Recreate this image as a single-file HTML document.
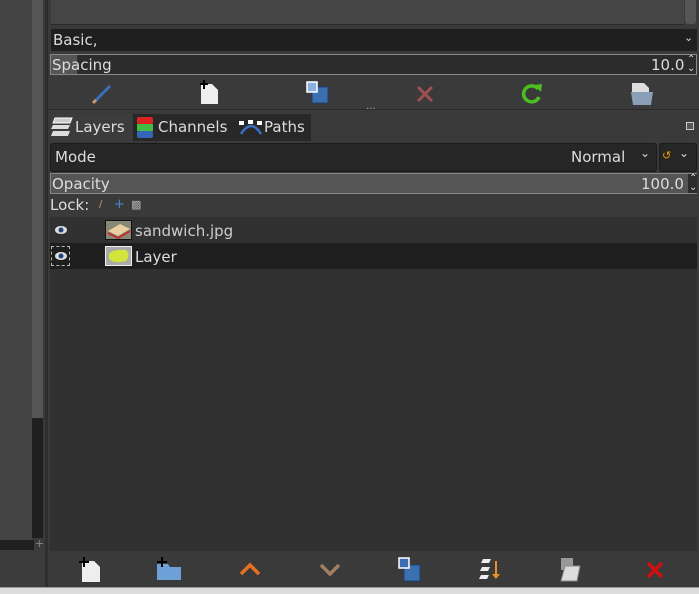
<!DOCTYPE html><html><head><style>
*{margin:0;padding:0;box-sizing:border-box}
body{width:699px;height:594px;overflow:hidden;background:#3a3a3a;font-family:"DejaVu Sans","Liberation Sans",sans-serif;color:#ddd;font-size:15px;position:relative}
.a{position:absolute}
.t{position:absolute;white-space:nowrap}
</style></head><body>
<div class="a" style="left:0;top:0;width:33px;height:540px;background:#444"></div>
<div class="a" style="left:32px;top:0;width:11px;height:420px;background:#555"></div>
<div class="a" style="left:32px;top:418px;width:11px;height:120px;background:#1f1f1f"></div>
<div class="a" style="left:0;top:540px;width:34px;height:10px;background:#1f1f1f"></div>
<div class="t" style="left:35px;top:537px;font-size:11px;color:#888">+</div>
<div class="a" style="left:0;top:550px;width:45px;height:37px;background:#3c3c3c"></div>
<div class="a" style="left:45px;top:0;width:3px;height:587px;background:#2e2e2e"></div>
<div class="a" style="left:0;top:587px;width:699px;height:7px;background:#dcdcdc;border-top:1px solid #999"></div>
<div class="a" style="left:48px;top:0;width:651px;height:587px;background:#3a3a3a"></div>
<div class="a" style="left:51px;top:0;width:633px;height:25px;background:#454545;border-bottom:1px solid #2a2a2a"></div>
<div class="a" style="left:685px;top:0;width:11px;height:24px;background:#555;border-radius:0 0 3px 3px"></div>
<div class="a" style="left:51px;top:29px;width:646px;height:22px;background:#1f1f1f"></div>
<div class="t" style="left:53px;top:31px">Basic,</div>
<div class="t" style="left:684px;top:31px;font-size:11px">⌄</div>
<div class="a" style="left:50px;top:54px;width:647px;height:21px;background:#2c2c2c;border:1px solid #888"></div>
<div class="a" style="left:51px;top:55px;width:26px;height:19px;background:#555"></div>
<div class="t" style="left:52px;top:56px">Spacing</div>
<div class="t" style="left:651px;top:56px">10.0</div>
<div class="t" style="left:687px;top:55px;font-size:10px;line-height:9px">⌃<br>⌄</div>
<svg class="a" style="left:90px;top:82px" width="24" height="24"><path d="M4 20 L20 4" stroke="#3a6fc0" stroke-width="3"/><path d="M3 21 L6 18" stroke="#c96" stroke-width="3"/></svg>
<svg class="a" style="left:198px;top:80px" width="24" height="26"><path d="M3 4 H14 L20 10 V24 H3Z" fill="#eee"/><path d="M6 0V9M2 4H10" stroke="#000" stroke-width="2"/></svg>
<svg class="a" style="left:306px;top:81px" width="24" height="24"><rect x="6" y="6" width="16" height="16" fill="#3a6fb0" stroke="#1e3f70"/><rect x="1" y="1" width="10" height="10" fill="#8ab0e0" stroke="#fff" stroke-width="1.5"/></svg>
<svg class="a" style="left:415px;top:84px" width="20" height="20"><path d="M3 3L17 17M17 3L3 17" stroke="#a05050" stroke-width="3"/></svg>
<svg class="a" style="left:521px;top:82px" width="24" height="22"><path d="M17 7 A8 8 0 1 0 18 15" fill="none" stroke="#4cbf20" stroke-width="3.5"/><path d="M13 3 L21 2 L20 10Z" fill="#4cbf20"/></svg>
<svg class="a" style="left:629px;top:82px" width="26" height="24"><path d="M3 1H15L20 6V14H3Z" fill="#ddd"/><path d="M2 10H24L22 23H4Z" fill="#8aa0b8"/></svg>
<div class="a" style="left:48px;top:109px;width:651px;height:1px;background:#2a2a2a"></div>
<div class="t" style="left:366px;top:101px;font-size:10px;color:#aaa">...</div>
<div class="a" style="left:50px;top:114px;width:82px;height:27px;background:#3c3c3c"></div>
<svg class="a" style="left:50px;top:116px" width="24" height="22"><path d="M5 2H22L20 7H3Z" fill="#ccc" stroke="#fff"/><path d="M3 9H20L18 13H1Z" fill="#ddd"/><path d="M3 15H20L18 20H1Z" fill="#ddd"/></svg>
<div class="t" style="left:75px;top:118px">Layers</div>
<div class="a" style="left:133px;top:114px;width:104px;height:27px;background:#282828"></div>
<svg class="a" style="left:136px;top:116px" width="18" height="24"><rect x="1" y="1" width="16" height="7" rx="2" fill="#d22"/><rect x="1" y="8" width="16" height="7" fill="#4b4"/><rect x="1" y="15" width="16" height="7" rx="2" fill="#36b"/></svg>
<div class="t" style="left:158px;top:118px">Channels</div>
<div class="a" style="left:237px;top:114px;width:74px;height:27px;background:#282828"></div>
<svg class="a" style="left:238px;top:118px" width="26" height="20"><path d="M3 16 Q13 0 23 16" fill="none" stroke="#3a6fc0" stroke-width="2.5"/><rect x="1" y="3" width="5" height="4" fill="#fff"/><rect x="10" y="2" width="5" height="4" fill="#fff"/><rect x="19" y="3" width="5" height="4" fill="#fff"/></svg>
<div class="t" style="left:264px;top:118px">Paths</div>
<div class="a" style="left:686px;top:122px;width:8px;height:8px;border:1px solid #ccc;background:#555"></div>
<div class="a" style="left:50px;top:143px;width:607px;height:29px;background:#262626;border-radius:3px;border:1px solid #1a1a1a"></div>
<div class="t" style="left:55px;top:148px">Mode</div>
<div class="t" style="left:571px;top:148px">Normal</div>
<div class="t" style="left:640px;top:146px;font-size:12px">⌄</div>
<div class="a" style="left:659px;top:143px;width:38px;height:29px;background:#262626;border-radius:3px;border:1px solid #1a1a1a"></div>
<div class="t" style="left:662px;top:149px;font-size:11px;color:#e90">↺</div>
<div class="t" style="left:679px;top:146px;font-size:12px">⌄</div>
<div class="a" style="left:50px;top:173px;width:647px;height:21px;background:#555;border:1px solid #888"></div>
<div class="t" style="left:52px;top:175px">Opacity</div>
<div class="t" style="left:641px;top:175px">100.0</div>
<div class="a" style="left:688px;top:174px;width:9px;height:19px;background:#2c2c2c"></div>
<div class="t" style="left:689px;top:174px;font-size:10px;line-height:9px">⌃<br>⌄</div>
<div class="t" style="left:50px;top:196px">Lock:</div>
<div class="t" style="left:99px;top:199px;font-size:10px;color:#c96">/</div>
<div class="t" style="left:114px;top:197px;font-size:13px;color:#48c">+</div>
<div class="t" style="left:131px;top:198px;font-size:11px;color:#aaa">▩</div>
<div class="a" style="left:50px;top:217px;width:647px;height:334px;background:#313131"></div>
<div class="a" style="left:50px;top:243px;width:647px;height:26px;background:#1e1e1e"></div>
<svg class="a" style="left:54px;top:225px" width="14" height="10"><ellipse cx="7" cy="5" rx="6" ry="4" fill="#ddd"/><circle cx="7" cy="5" r="2.5" fill="#247"/></svg>
<div class="a" style="left:51px;top:246px;width:19px;height:20px;border:1px dashed #bbb"></div>
<svg class="a" style="left:54px;top:251px" width="14" height="10"><ellipse cx="7" cy="5" rx="6" ry="4" fill="#ddd"/><circle cx="7" cy="5" r="2.5" fill="#247"/></svg>
<div class="a" style="left:105px;top:220px;width:27px;height:20px;background:#887;border:1px solid #111"></div>
<svg class="a" style="left:106px;top:221px" width="25" height="18"><path d="M2 10L14 3L24 8L12 15Z" fill="#e8d0a0"/><path d="M2 12L12 17L24 10" stroke="#b33" stroke-width="2" fill="none"/></svg>
<div class="t" style="left:135px;top:222px;color:#ccc">sandwich.jpg</div>
<div class="a" style="left:105px;top:246px;width:27px;height:20px;background:#aaa;border:1px solid #eee"></div>
<svg class="a" style="left:106px;top:247px" width="25" height="18"><path d="M3 7Q6 2 20 3Q25 8 20 14Q8 17 3 12Z" fill="#d4e43c"/></svg>
<div class="t" style="left:135px;top:248px">Layer</div>
<svg class="a" style="left:78px;top:557px" width="24" height="26"><path d="M4 4H16L22 10V25H4Z" fill="#eee"/><path d="M6 0V10M1 5H11" stroke="#000" stroke-width="2"/></svg>
<svg class="a" style="left:156px;top:557px" width="26" height="24"><path d="M1 7H12L14 10H25V23H1Z" fill="#6ea0d8"/><path d="M6 0V10M1 5H11" stroke="#000" stroke-width="2"/></svg>
<svg class="a" style="left:238px;top:561px" width="24" height="16"><path d="M3 13L12 4L21 13" fill="none" stroke="#e87020" stroke-width="3.5"/></svg>
<svg class="a" style="left:318px;top:562px" width="24" height="16"><path d="M3 3L12 12L21 3" fill="none" stroke="#a08060" stroke-width="3.5"/></svg>
<svg class="a" style="left:398px;top:557px" width="24" height="26"><rect x="6" y="8" width="16" height="16" fill="#3a6fb0" stroke="#1e3f70"/><rect x="1" y="1" width="10" height="10" fill="#3a6fb0" stroke="#fff" stroke-width="1.5"/></svg>
<svg class="a" style="left:478px;top:558px" width="24" height="24"><path d="M5 1H13L11 5H3Z M4 9H12L10 13H2Z M3 17H11L9 21H1Z" fill="#eee"/><path d="M18 3V19" stroke="#e89020" stroke-width="2"/><path d="M14 16L18 21L22 16Z" fill="#e89020"/></svg>
<svg class="a" style="left:558px;top:557px" width="26" height="26"><path d="M3 1H15V13H3Z" fill="#999"/><path d="M7 9H22L19 24H3Z" fill="#ddd" stroke="#888"/></svg>
<svg class="a" style="left:645px;top:560px" width="20" height="20"><path d="M3 3L17 17M17 3L3 17" stroke="#d01010" stroke-width="3.5"/></svg>
</body></html>
